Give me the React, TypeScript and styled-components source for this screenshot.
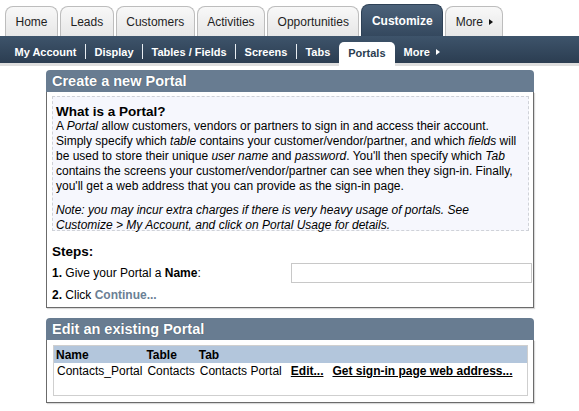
import * as React from 'react'
import styled, { createGlobalStyle, css } from 'styled-components'

const GlobalStyle = createGlobalStyle`
  body {
    margin: 0;
    background: #ffffff;
    font-family: "Liberation Sans", Arial, Helvetica, sans-serif;
    font-size: 12px;
    color: #000;
  }
`
const Page = styled.div`
  width: 579px;
  height: 411px;
  overflow: hidden;
`
const TabRow = styled.div`
  display: flex;
  align-items: flex-end;
  gap: 2px;
  padding: 0 0 0 5px;
  height: 36px;
`
const Tab = styled.div<{ $active?: boolean }>`
  display: flex;
  align-items: center;
  gap: 6px;
  height: 29px;
  padding: 0 9.5px;
  border: 1px solid #bdbdbd;
  border-bottom: none;
  border-radius: 8px 8px 0 0;
  background: linear-gradient(#f8f8f8, #e7e7e7);
  color: #1e1e1e;
  font-size: 12px;
  ${({ $active }) =>
    $active &&
    css`
      height: 31px;
      border-color: #2e4156;
      background: linear-gradient(#4c627a, #34485e);
      color: #ffffff;
      font-weight: bold;
    `}
`
const Arrow = styled.span<{ $light?: boolean }>`
  display: inline-block;
  width: 0;
  height: 0;
  border-top: 3.5px solid transparent;
  border-bottom: 3.5px solid transparent;
  border-left: 4px solid ${({ $light }) => ($light ? '#ffffff' : '#111111')};
`
const SubNav = styled.div`
  display: flex;
  align-items: flex-end;
  height: 27px;
  padding-left: 6px;
  background: linear-gradient(#3e546b, #2b3d51);
  border-bottom: 3px solid #dedede;
`
const SubItem = styled.div<{ $active?: boolean }>`
  display: flex;
  align-items: center;
  gap: 6px;
  height: 22px;
  padding: 0 8.5px;
  color: #ffffff;
  font-size: 11px;
  font-weight: bold;
  ${({ $active }) =>
    $active &&
    css`
      height: 21px;
      margin-bottom: -3px;
      padding: 0 9.5px 3px;
      background: #ffffff;
      color: #2b3d51;
      border-radius: 5px 5px 0 0;
    `}
`
const Sep = styled.div`
  width: 1px;
  height: 15px;
  margin-bottom: 4px;
  background: #e8edf2;
`
const Content = styled.div`
  display: flex;
  flex-direction: column;
  gap: 10px;
  width: 488px;
  margin: 4px 0 0 46px;
`
const Panel = styled.div``
const PanelHead = styled.div`
  height: 22px;
  padding-left: 6px;
  display: flex;
  align-items: center;
  background: #687c91;
  border-radius: 4px 4px 0 0;
  color: #ffffff;
  font-size: 14.5px;
  font-weight: bold;
  text-shadow: 0 0 1px #3a4a5a;
`
const PanelBody = styled.div<{ $pad?: string }>`
  border: 1px solid #6b6b6b;
  border-top: none;
  box-shadow: 1px 1px 1px rgba(0, 0, 0, 0.15);
  padding: ${({ $pad }) => $pad || '4px 0 2px 5px'};
`
const InfoBox = styled.div`
  margin-right: 4px;
  padding: 7px 3px 0 3px;
  border: 1px dashed #cfd2d8;
  background: #f6f7fd;
  line-height: 15px;
`
const InfoTitle = styled.div`
  font-size: 13.5px;
  font-weight: bold;
  line-height: 15px;
`
const Para = styled.p<{ $italic?: boolean }>`
  margin: 0;
  ${({ $italic }) =>
    $italic &&
    css`
      font-style: italic;
      margin: 9px 0 -3px;
    `}
`
const StepsTitle = styled.div`
  margin: 13px 0 3px;
  font-size: 13.5px;
  line-height: 16px;
  font-weight: bold;
`
const StepRow = styled.div`
  display: flex;
  align-items: center;
  justify-content: space-between;
  height: 20px;
  margin-top: 2px;
`
const NameInput = styled.input`
  box-sizing: border-box;
  width: 241px;
  height: 20px;
  margin-right: 1px;
  border: 1px solid #c8c8c8;
  padding: 0 3px;
  font: inherit;
`
const ContinueLink = styled.span`
  color: #6b8095;
  font-weight: bold;
`
const TableBox = styled.div`
  height: 49px;
  border: 1px solid #cfcfcf;
  margin-right: 5px;
`
const Grid = styled.table`
  width: 100%;
  border-collapse: collapse;
`
const HeadCell = styled.th`
  height: 17px;
  padding: 0 2px 0 2px;
  background: #b3c6dc;
  text-align: left;
  white-space: nowrap;
  font-weight: bold;
`
const Cell = styled.td<{ $fill?: boolean }>`
  height: 16px;
  padding: 0 2px 0 3px;
  white-space: nowrap;
  width: ${({ $fill }) => ($fill ? '100%' : 'auto')};
`
const ActionLink = styled.span`
  font-weight: bold;
  text-decoration: underline;
  color: #000;
  margin-left: 4px;
`

const mainTabs = ['Home', 'Leads', 'Customers', 'Activities', 'Opportunities']

export default function App() {
  return (
    <Page>
      <GlobalStyle />
      <TabRow>
        {mainTabs.map(t => (
          <Tab key={t}>{t}</Tab>
        ))}
        <Tab $active>Customize</Tab>
        <Tab>
          More <Arrow />
        </Tab>
      </TabRow>
      <SubNav>
        <SubItem>My Account</SubItem>
        <Sep />
        <SubItem>Display</SubItem>
        <Sep />
        <SubItem>Tables / Fields</SubItem>
        <Sep />
        <SubItem>Screens</SubItem>
        <Sep />
        <SubItem>Tabs</SubItem>
        <SubItem $active>Portals</SubItem>
        <SubItem>
          More <Arrow $light />
        </SubItem>
      </SubNav>
      <Content>
        <Panel>
          <PanelHead>Create a new Portal</PanelHead>
          <PanelBody>
            <InfoBox>
              <InfoTitle>What is a Portal?</InfoTitle>
              <Para>
                A <i>Portal</i> allow customers, vendors or partners to sign in and access their
                account. Simply specify which <i>table</i> contains your customer/vendor/partner,
                and which <i>fields</i> will be used to store their unique <i>user name</i> and{' '}
                <i>password</i>. You'll then specify which <i>Tab</i> contains the screens your
                customer/vendor/partner can see when they sign-in. Finally, you'll get a web
                address that you can provide as the sign-in page.
              </Para>
              <Para $italic>
                Note: you may incur extra charges if there is very heavy usage of portals. See
                Customize &gt; My Account, and click on Portal Usage for details.
              </Para>
            </InfoBox>
            <StepsTitle>Steps:</StepsTitle>
            <StepRow>
              <span>
                <b>1.</b> Give your Portal a <b>Name</b>:
              </span>
              <NameInput />
            </StepRow>
            <StepRow>
              <span>
                <b>2.</b> Click <ContinueLink>Continue...</ContinueLink>
              </span>
            </StepRow>
          </PanelBody>
        </Panel>
        <Panel>
          <PanelHead>Edit an existing Portal</PanelHead>
          <PanelBody $pad="5px 0 6px 6px">
            <TableBox>
              <Grid>
                <thead>
                  <tr>
                    <HeadCell>Name</HeadCell>
                    <HeadCell>Table</HeadCell>
                    <HeadCell>Tab</HeadCell>
                    <HeadCell />
                    <HeadCell />
                  </tr>
                </thead>
                <tbody>
                  <tr>
                    <Cell>Contacts_Portal</Cell>
                    <Cell>Contacts</Cell>
                    <Cell>Contacts Portal</Cell>
                    <Cell>
                      <ActionLink>Edit...</ActionLink>
                    </Cell>
                    <Cell $fill>
                      <ActionLink>Get sign-in page web address...</ActionLink>
                    </Cell>
                  </tr>
                </tbody>
              </Grid>
            </TableBox>
          </PanelBody>
        </Panel>
      </Content>
    </Page>
  )
}
